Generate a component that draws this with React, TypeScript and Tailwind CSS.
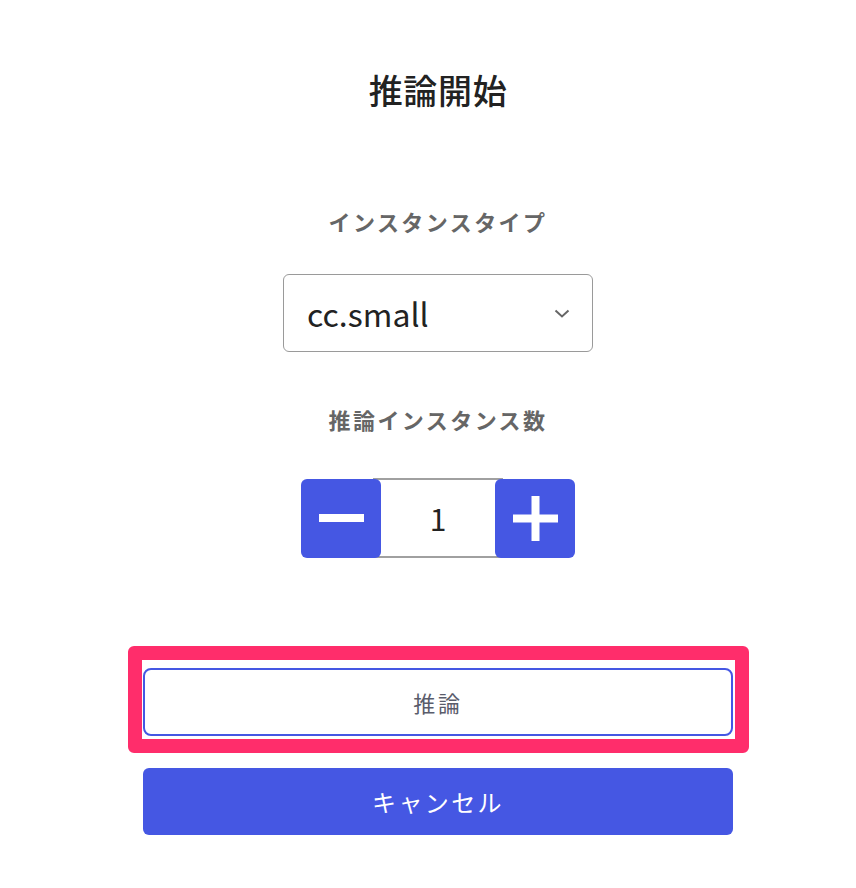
const font = { fontFamily: '"Noto Sans CJK JP", "Noto Sans", sans-serif' };

export default function App() {
	return (
		<div className="min-h-screen bg-white" style={font}>
			<div className="ml-[143px] w-[590px] flex flex-col items-center pt-[68px]">
				{/* Title */}
				<h1 className="text-[34px] leading-[44px] font-medium text-[#222] tracking-[0.02em]">推論開始</h1>

				{/* Instance type */}
				<p className="mt-[94px] text-[22px] leading-[30px] font-bold text-[#666] tracking-[0.11em]">
					インスタンスタイプ
				</p>
				<div className="mt-[38px] w-[310px] h-[78px] border border-[#9a9a9a] rounded-md flex items-center justify-between pl-[23px] pr-[22px]">
					<span className="text-[32px] text-[#222]">cc.small</span>
					<svg width="16" height="9" viewBox="0 0 16 9" fill="none">
						<path d="M1.5 1.5 L8 7.5 L14.5 1.5" stroke="#666" strokeWidth="2" />
					</svg>
				</div>

				{/* Instance count */}
				<p className="mt-[52px] text-[22px] leading-[30px] font-bold text-[#666] tracking-[0.11em]">
					推論インスタンス数
				</p>
				<div className="mt-[44px] flex items-center">
					<button className="relative z-10 w-[80px] h-[79px] bg-[#4557e3] rounded-md flex items-center justify-center">
						<span className="block w-[45px] h-[8px] bg-white" />
					</button>
					<div className="-mx-[8px] w-[130px] h-[80px] border-y-2 border-[#a0a0a0] flex items-center justify-center text-[30px] text-[#222]">
						1
					</div>
					<button className="relative z-10 w-[80px] h-[79px] bg-[#4557e3] rounded-md flex items-center justify-center">
						<svg width="45" height="45" viewBox="0 0 45 45">
							<rect x="0" y="18.5" width="45" height="8" fill="#fff" />
							<rect x="18.5" y="0" width="8" height="45" fill="#fff" />
						</svg>
					</button>
				</div>

				{/* Actions */}
				<div className="relative mt-[110px] w-full">
					<button className="w-full h-[68px] border-2 border-[#4557e3] rounded-lg bg-white text-[22px] text-[#5a5c6b] tracking-[0.12em]">
						推論
					</button>
					<div className="absolute -left-[15px] -right-[16px] -top-[22px] -bottom-[17px] border-[14px] border-[#ff2d6b] rounded-md pointer-events-none" />
				</div>
				<button className="mt-[32px] w-full h-[67px] rounded-md bg-[#4557e3] text-white text-[24px] tracking-[0.1em]">
					キャンセル
				</button>
			</div>
		</div>
	);
}
